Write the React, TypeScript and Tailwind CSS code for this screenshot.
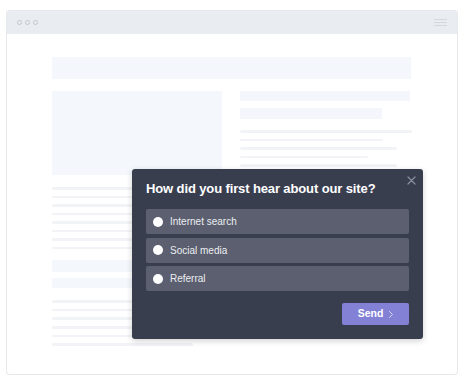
import React from 'react';

const Line = ({ w, className = '' }: { w: string; className?: string }) => (
  <div className={`h-[2.5px] rounded-full bg-[#f1f3f6] ${w} ${className}`} />
);

const options = ['Internet search', 'Social media', 'Referral'];

const SurveyPopup: React.FC = () => (
  <div className="absolute left-[132px] top-[169px] w-[291px] h-[170px] rounded-[3px] bg-[#393e4f] shadow-[0_2px_6px_rgba(0,0,0,0.18)] px-[14px] pt-[12px] font-['Liberation_Sans',Arial,sans-serif]">
    <button className="absolute right-[7px] top-[7px] p-0 text-[#8b90a0]" aria-label="Close">
      <svg width="9" height="9" viewBox="0 0 9 9" fill="none" stroke="currentColor" strokeWidth="1.2" strokeLinecap="round">
        <path d="M1 1 L8 8 M8 1 L1 8" />
      </svg>
    </button>
    <h3 className="text-[13px] leading-[16px] font-bold tracking-[-0.12px] text-white">How did you first hear about our site?</h3>
    <div className="mt-[12px] flex flex-col gap-[3.5px]">
      {options.map((o) => (
        <label key={o} className="flex items-center h-[25px] rounded-[2px] bg-[#5b5f6f] pl-[7px]">
          <span className="w-[10px] h-[10px] rounded-full bg-white" />
          <span className="ml-[7px] text-[10px] text-[#eceef2]">{o}</span>
        </label>
      ))}
    </div>
    <div className="mt-[12px] flex justify-end">
      <button className="flex items-center justify-center gap-[6px] w-[67px] h-[22px] rounded-[2px] bg-[#8281d6] text-white text-[10.5px] font-bold">
        Send
        <svg width="4" height="7" viewBox="0 0 4 7" fill="none" stroke="#d6d6f5" strokeWidth="1" strokeLinecap="round">
          <path d="M0.5 0.5 L3.5 3.5 L0.5 6.5" />
        </svg>
      </button>
    </div>
  </div>
);

export default function App() {
  return (
    <div className="relative w-[474px] h-[391px] bg-white overflow-hidden">
      <div className="ml-[6px] mt-[10px] w-[452px] h-[365px] rounded-[3px] border border-[#e6e8ec] bg-white overflow-hidden">
        <div className="h-[23px] bg-[#e9ecf0] flex items-center justify-between pl-[10px] pr-[10px]">
          <div className="flex gap-[3px]">
            <span className="w-[5px] h-[5px] rounded-full border border-[#c3c7cf]" />
            <span className="w-[5px] h-[5px] rounded-full border border-[#c3c7cf]" />
            <span className="w-[5px] h-[5px] rounded-full border border-[#c3c7cf]" />
          </div>
          <div className="flex flex-col gap-[2px]">
            <span className="w-[13px] h-[1px] bg-[#d3d7de]" />
            <span className="w-[13px] h-[1px] bg-[#d3d7de]" />
            <span className="w-[13px] h-[1px] bg-[#d3d7de]" />
          </div>
        </div>
        <div className="pl-[45px]">
          <div className="mt-[23px] w-[359px] h-[22px] bg-[#f4f7fc]" />
          <div className="mt-[12px] flex gap-[18px]">
            <div className="w-[170px] flex flex-col">
              <div className="h-[84px] bg-[#f4f7fc]" />
              <div className="mt-[12px] flex flex-col gap-[6px]">
                <Line w="w-[170px]" />
                <Line w="w-[170px]" />
                <Line w="w-[160px]" />
                <Line w="w-[170px]" />
                <Line w="w-[165px]" />
                <Line w="w-[170px]" />
                <Line w="w-[150px]" />
                <Line w="w-[170px]" />
              </div>
              <div className="mt-[11px] h-[12px] bg-[#f4f7fc] w-[170px]" />
              <div className="mt-[6px] h-[10px] bg-[#f4f7fc] w-[170px]" />
              <div className="mt-[12px] flex flex-col gap-[6.2px]">
                <Line w="w-[170px]" />
                <Line w="w-[165px]" />
                <Line w="w-[170px]" />
                <Line w="w-[160px]" />
                <Line w="w-[170px]" />
                <Line w="w-[141px]" />
              </div>
            </div>
            <div className="w-[172px] flex flex-col">
              <div className="h-[10px] w-[170px] bg-[#f4f6fc]" />
              <div className="mt-[7px] h-[11px] w-[142px] bg-[#f4f6fc]" />
              <div className="mt-[11px] flex flex-col gap-[6px]">
                <Line w="w-[172px]" />
                <Line w="w-[143px]" />
                <Line w="w-[157px]" />
                <Line w="w-[128px]" />
                <Line w="w-[157px]" />
                <Line w="w-[170px]" />
                <Line w="w-[150px]" />
                <Line w="w-[165px]" />
                <Line w="w-[170px]" />
                <Line w="w-[160px]" />
                <Line w="w-[170px]" />
                <Line w="w-[150px]" />
                <Line w="w-[165px]" />
                <Line w="w-[170px]" />
                <Line w="w-[160px]" />
                <Line w="w-[170px]" />
                <Line w="w-[155px]" />
                <Line w="w-[170px]" />
                <Line w="w-[166px]" />
                <Line w="w-[128px]" />
              </div>
            </div>
          </div>
        </div>
      </div>
      <SurveyPopup />
    </div>
  );
}
